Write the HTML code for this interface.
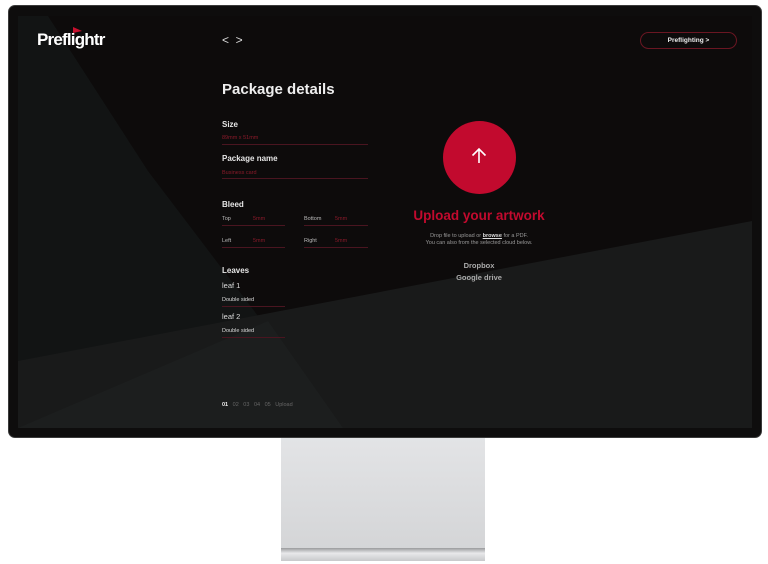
<!DOCTYPE html>
<html><head><meta charset="utf-8"><style>
*{margin:0;padding:0;box-sizing:border-box}
body{width:768px;height:564px;background:#fff;position:relative;overflow:hidden;font-family:"Liberation Sans",sans-serif}
.a{position:absolute;white-space:nowrap}
.bez{position:absolute;left:8px;top:5px;width:754px;height:433px;background:#0e0d0d;border-radius:7px;border:1px solid #3a3a3a}
.scr{position:absolute;left:18px;top:16px;width:734px;height:412px;background:#0d0b0b;overflow:hidden}
.lbl{color:#e6e6e6;font-weight:bold;font-size:8px}
.val{color:#8a1a2a;font-size:5.5px}
.ln{position:absolute;height:1px;background:#4a1520}
.sm{color:#bbb;font-size:5.5px}
</style></head><body>
<div class="a" style="left:281px;top:437px;width:204px;height:112px;background:linear-gradient(#e3e4e6,#d4d5d7)"></div>
<div class="a" style="left:281px;top:548px;width:204px;height:13px;background:linear-gradient(#9a9b9d,#e8e8ea 40%,#c8c9cb)"></div>
<div class="bez"></div>
<div class="scr">
<svg width="734" height="412" style="position:absolute;left:0;top:0">
<polygon points="30,0 130,155 325,412 0,412 0,0" fill="#121414"/>
<polygon points="0,345 734,205 734,412 0,412" fill="#191a1a"/>
<polygon points="0,412 250,305 325,412" fill="#1c1e1e"/>
</svg>
</div>
<div class="a" style="left:37px;top:30px;color:#fff;font-weight:bold;font-size:17px;letter-spacing:-0.8px">Preflightr</div>
<svg class="a" style="left:73px;top:27px" width="10" height="7"><polygon points="0,0 9,4 0,6" fill="#c8102e"/></svg>
<div class="a" style="left:222px;top:33px;color:#ddd;font-size:12px">&lt;&nbsp;&nbsp;&gt;</div>
<div class="a" style="left:640px;top:32px;width:97px;height:17px;border:1px solid #6a1622;border-radius:9px;color:#eee;font-size:6.5px;font-weight:bold;text-align:center;line-height:15px">Preflighting &gt;</div>
<div class="a" style="left:222px;top:81px;color:#eee;font-size:15px;font-weight:bold">Package details</div>
<div class="a lbl" style="left:222px;top:120px">Size</div>
<div class="a val" style="left:222px;top:135px">89mm x 51mm</div>
<div class="ln" style="left:222px;top:144px;width:146px"></div>
<div class="a lbl" style="left:222px;top:154px">Package name</div>
<div class="a val" style="left:222px;top:170px">Business card</div>
<div class="ln" style="left:222px;top:178px;width:146px"></div>
<div class="a lbl" style="left:222px;top:200px">Bleed</div>
<div class="a sm" style="left:222px;top:216px">Top</div><div class="a val" style="left:253px;top:216px">5mm</div>
<div class="a sm" style="left:304px;top:216px">Bottom</div><div class="a val" style="left:335px;top:216px">5mm</div>
<div class="ln" style="left:222px;top:225px;width:63px"></div><div class="ln" style="left:304px;top:225px;width:64px"></div>
<div class="a sm" style="left:222px;top:238px">Left</div><div class="a val" style="left:253px;top:238px">5mm</div>
<div class="a sm" style="left:304px;top:238px">Right</div><div class="a val" style="left:335px;top:238px">5mm</div>
<div class="ln" style="left:222px;top:247px;width:63px"></div><div class="ln" style="left:304px;top:247px;width:64px"></div>
<div class="a lbl" style="left:222px;top:266px">Leaves</div>
<div class="a" style="left:222px;top:281px;color:#ddd;font-size:7.5px">leaf 1</div>
<div class="a sm" style="left:222px;top:297px;color:#ddd">Double sided</div>
<div class="ln" style="left:222px;top:306px;width:63px"></div>
<div class="a" style="left:222px;top:312px;color:#ddd;font-size:7.5px">leaf 2</div>
<div class="a sm" style="left:222px;top:328px;color:#ddd">Double sided</div>
<div class="ln" style="left:222px;top:337px;width:63px"></div>
<div class="a" style="left:222px;top:402px;font-size:5.5px;color:#666;word-spacing:3px"><b style="color:#eee">01</b> 02 03 04 05 Upload</div>
<div class="a" style="left:443px;top:121px;width:73px;height:73px;border-radius:50%;background:#c20a2e"></div>
<svg class="a" style="left:469px;top:146px" width="20" height="20"><path d="M10 17V3M3.5 9.5L10 3l6.5 6.5" stroke="#fff" stroke-width="1.6" fill="none"/></svg>
<div class="a" style="left:380px;top:208px;width:198px;text-align:center;color:#c20a2e;font-weight:bold;font-size:13.5px">Upload your artwork</div>
<div class="a" style="left:380px;top:233px;width:198px;text-align:center;color:#999;font-size:5.5px;line-height:7px">Drop file to upload or <u style="color:#ddd;font-weight:bold">browse</u> for a PDF.<br>You can also from the selected cloud below.</div>
<div class="a" style="left:380px;top:260px;width:198px;text-align:center;color:#aaa;font-size:7.5px;font-weight:bold;line-height:12px">Dropbox<br>Google drive</div>
</body></html>
